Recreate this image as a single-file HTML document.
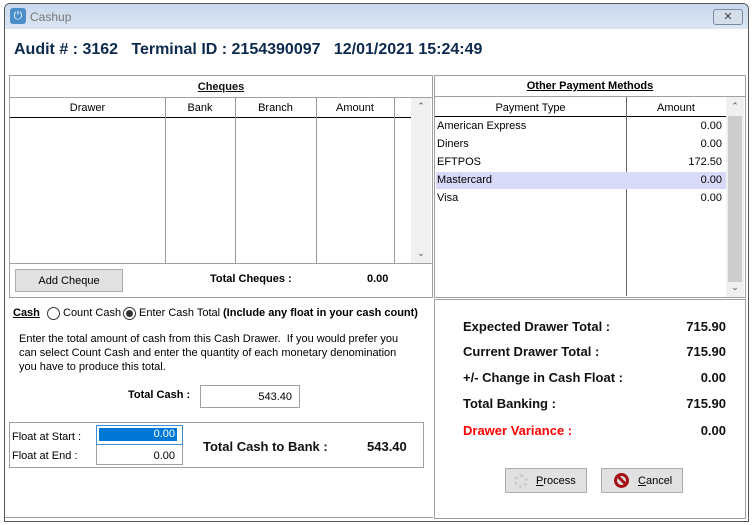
<!DOCTYPE html>
<html><head><style>
*{box-sizing:border-box;margin:0;padding:0}
body{width:753px;height:525px;background:#fff;font-family:"Liberation Sans",sans-serif;font-size:11px;color:#000;position:relative;overflow:hidden}
.a{position:absolute}
.b{position:absolute;border:1px solid #a0a0a0}
.bold{font-weight:bold}
.r{text-align:right}
.c{text-align:center}
.btn{position:absolute;background:#e1e1e1;border:1px solid #adadad;font-size:11px;display:flex;align-items:center;justify-content:center}
.tl{font-size:13px;font-weight:bold;color:#111}
</style></head><body>
<div class="a" style="left:4px;top:3px;width:745px;height:519px;border:1px solid #555;border-radius:6px 6px 0 0;background:#fff"></div>
<div class="a" style="left:5px;top:4px;width:743px;height:25px;background:linear-gradient(#c9d9ec,#dbe6f3);border-radius:5px 5px 0 0"></div>
<div class="a" style="left:10px;top:8px;width:16px;height:16px;background:#4a8fc9;border-radius:3px;color:#fff;font-size:11px;text-align:center;line-height:16px">⏻</div>
<div class="a" style="left:30px;top:10px;color:#777;font-size:12px">Cashup</div>
<div class="a" style="left:713px;top:9px;width:30px;height:16px;border:1px solid #7a8aa0;border-radius:3px;background:#d4dfeb;color:#444;font-size:11px;text-align:center;line-height:14px">✕</div>
<div class="a" style="left:14px;top:41px;font-size:16px;font-weight:bold;color:#0d2a4e;white-space:pre">Audit # : 3162   Terminal ID : 2154390097   12/01/2021 15:24:49</div>

<!-- cheques -->
<div class="b" style="left:9px;top:75px;width:424px;height:223px"></div>
<div class="a bold c" style="left:9px;top:81px;width:424px;text-decoration:underline;color:#111">Cheques</div>
<div class="a" style="left:10px;top:97px;width:422px;border-top:1px solid #a0a0a0"></div>
<div class="a" style="left:10px;top:117px;width:401px;border-top:1px solid #000"></div>
<div class="a c" style="left:10px;top:102px;width:155px">Drawer</div>
<div class="a c" style="left:165px;top:102px;width:70px">Bank</div>
<div class="a c" style="left:235px;top:102px;width:81px">Branch</div>
<div class="a c" style="left:316px;top:102px;width:78px">Amount</div>
<div class="a" style="left:165px;top:98px;height:165px;border-left:1px solid #999"></div>
<div class="a" style="left:235px;top:98px;height:165px;border-left:1px solid #999"></div>
<div class="a" style="left:316px;top:98px;height:165px;border-left:1px solid #999"></div>
<div class="a" style="left:394px;top:98px;height:165px;border-left:1px solid #999"></div>
<div class="a" style="left:411px;top:98px;width:20px;height:165px;background:#f0f0f0"></div>
<div class="a c" style="left:411px;top:101px;width:20px;font-size:9px;color:#555">⌃</div>
<div class="a c" style="left:411px;top:248px;width:20px;font-size:9px;color:#555">⌄</div>
<div class="a" style="left:10px;top:263px;width:422px;border-top:1px solid #a0a0a0"></div>
<div class="btn" style="left:15px;top:269px;width:108px;height:23px">Add Cheque</div>
<div class="a bold" style="left:210px;top:273px">Total Cheques :</div>
<div class="a bold" style="left:367px;top:273px">0.00</div>

<!-- cash -->
<div class="a bold" style="left:13px;top:307px;text-decoration:underline">Cash</div>
<div class="a" style="left:47px;top:307px;width:13px;height:13px;border:1px solid #333;border-radius:50%"></div>
<div class="a" style="left:63px;top:307px">Count Cash</div>
<div class="a" style="left:123px;top:307px;width:13px;height:13px;border:1px solid #333;border-radius:50%"><div style="margin:2px;width:7px;height:7px;border-radius:50%;background:#333"></div></div>
<div class="a" style="left:139px;top:307px">Enter Cash Total</div>
<div class="a bold" style="left:223px;top:307px">(Include any float in your cash count)</div>
<div class="a" style="left:19px;top:332px;line-height:14px;width:385px">Enter the total amount of cash from this Cash Drawer.&nbsp; If you would prefer you can select Count Cash and enter the quantity of each monetary denomination you have to produce this total.</div>
<div class="a bold" style="left:128px;top:389px">Total Cash :</div>
<div class="b r" style="left:200px;top:385px;width:100px;height:23px;padding:5px 7px 0 0">543.40</div>
<div class="b" style="left:9px;top:422px;width:415px;height:46px"></div>
<div class="a" style="left:12px;top:431px">Float at Start :</div>
<div class="a" style="left:12px;top:450px">Float at End :</div>
<div class="a" style="left:96px;top:425px;width:87px;height:40px;border:1px solid #a0a0a0"></div>
<div class="a" style="left:96px;top:425px;width:87px;height:20px;border:1px solid #3c8ed8"></div>
<div class="a r" style="left:99px;top:428px;width:78px;height:13px;background:#0078d7;color:#fff;padding-right:2px;line-height:13px">0.00</div>
<div class="a r" style="left:99px;top:450px;width:78px;padding-right:2px">0.00</div>
<div class="a tl" style="left:203px;top:439px">Total Cash to Bank :</div>
<div class="a tl" style="left:367px;top:439px">543.40</div>
<div class="a" style="left:5px;top:517px;width:428px;border-top:1px solid #a0a0a0"></div>

<!-- other payments -->
<div class="b" style="left:434px;top:75px;width:312px;height:223px"></div>
<div class="a bold c" style="left:434px;top:80px;width:312px;text-decoration:underline">Other Payment Methods</div>
<div class="a" style="left:435px;top:96px;width:310px;border-top:1px solid #a0a0a0"></div>
<div class="a" style="left:435px;top:116px;width:291px;border-top:1px solid #000"></div>
<div class="a c" style="left:435px;top:102px;width:191px">Payment Type</div>
<div class="a c" style="left:626px;top:102px;width:100px">Amount</div>
<div class="a" style="left:626px;top:97px;height:199px;border-left:1px solid #666"></div>
<div class="a" style="left:726px;top:97px;width:18px;height:200px;background:#f0f0f0"></div>
<div class="a" style="left:728px;top:116px;width:14px;height:166px;background:#cdcdcd"></div>
<div class="a c" style="left:726px;top:101px;width:18px;font-size:9px;color:#555">⌃</div>
<div class="a c" style="left:726px;top:282px;width:18px;font-size:9px;color:#555">⌄</div>
<div class="a" style="left:436px;top:172px;width:290px;height:17px;background:#d9d9fa"></div>
<div class="a" style="left:437px;top:120px">American Express</div><div class="a r" style="left:626px;top:120px;width:96px">0.00</div>
<div class="a" style="left:437px;top:138px">Diners</div><div class="a r" style="left:626px;top:138px;width:96px">0.00</div>
<div class="a" style="left:437px;top:156px">EFTPOS</div><div class="a r" style="left:626px;top:156px;width:96px">172.50</div>
<div class="a" style="left:437px;top:174px">Mastercard</div><div class="a r" style="left:626px;top:174px;width:96px">0.00</div>
<div class="a" style="left:437px;top:192px">Visa</div><div class="a r" style="left:626px;top:192px;width:96px">0.00</div>

<!-- totals -->
<div class="b" style="left:434px;top:299px;width:312px;height:220px"></div>
<div class="a tl" style="left:463px;top:319px">Expected Drawer Total :</div><div class="a tl r" style="left:626px;top:319px;width:100px">715.90</div>
<div class="a tl" style="left:463px;top:344px">Current Drawer Total :</div><div class="a tl r" style="left:626px;top:344px;width:100px">715.90</div>
<div class="a tl" style="left:463px;top:370px">+/- Change in Cash Float :</div><div class="a tl r" style="left:626px;top:370px;width:100px">0.00</div>
<div class="a tl" style="left:463px;top:396px">Total Banking :</div><div class="a tl r" style="left:626px;top:396px;width:100px">715.90</div>
<div class="a tl" style="left:463px;top:423px;color:#f00">Drawer Variance :</div><div class="a tl r" style="left:626px;top:423px;width:100px">0.00</div>
<div class="btn" style="left:505px;top:468px;width:82px;height:25px;justify-content:flex-start;padding-left:8px"><span style="display:inline-block;width:14px;height:14px;border-radius:50%;border:3px dotted #ccc;margin-right:8px"></span><span><u>P</u>rocess</span></div>
<div class="btn" style="left:601px;top:468px;width:82px;height:25px;justify-content:flex-start;padding-left:12px"><span style="display:inline-block;width:15px;height:15px;border-radius:50%;border:3px solid #a40f14;margin-right:9px;position:relative;overflow:hidden"><span style="position:absolute;left:-2px;top:3px;width:14px;height:3px;background:#a40f14;transform:rotate(45deg)"></span></span><span><u>C</u>ancel</span></div>
</body></html>
